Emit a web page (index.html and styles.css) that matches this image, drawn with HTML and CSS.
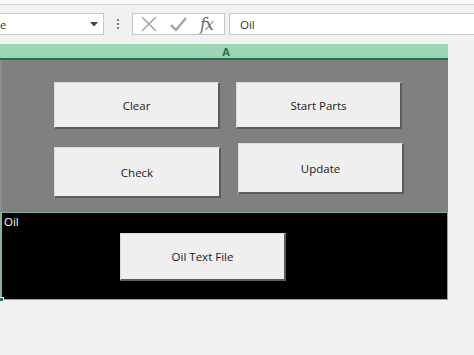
FILE: index.html
```html
<!DOCTYPE html>
<html>
<head>
<meta charset="utf-8">
<link rel="stylesheet" href="styles.css">
</head>
<body>
<div class="page">
  <div class="topstrip"></div>
  <div class="fbar">
    <div class="namebox">
      <span class="nametext">e</span>
      <svg class="dd" width="8" height="5" viewBox="0 0 8 5"><path d="M0 0H8L4 4.5Z" fill="#444"/></svg>
    </div>
    <div class="dots"><i></i><i></i><i></i></div>
    <div class="fxbox">
      <svg width="18" height="18" viewBox="0 0 18 18"><path d="M2 2L16 16M16 2L2 16" stroke="#a6a6a6" stroke-width="1.6" fill="none"/></svg>
      <svg width="18" height="18" viewBox="0 0 18 18"><path d="M2 10L7 15L17 3" stroke="#a6a6a6" stroke-width="2.4" fill="none"/></svg>
      <span class="fx">fx</span>
    </div>
    <div class="finput">Oil</div>
  </div>
  <div class="sheet">
    <div class="col">
      <div class="colhead">A</div>
      <div class="grayarea">
        <div class="bcol left">
          <div class="btn b1">Clear</div>
          <div class="btn b3">Check</div>
        </div>
        <div class="bcol right">
          <div class="btn b2">Start Parts</div>
          <div class="btn b4">Update</div>
        </div>
      </div>
      <div class="blackarea">
        <div class="oillabel">Oil</div>
        <div class="btn b5">Oil Text File</div>
        <span class="handle"></span>
      </div>
    </div>
    <div class="filler"></div>
  </div>
</div>
</body>
</html>
```
FILE: styles.css
```css
html, body { margin: 0; padding: 0; }
body {
  width: 474px;
  height: 355px;
  overflow: hidden;
  background: #f1f1f1;
  font-family: "Open Sans", "Noto Sans", sans-serif;
}
.page { display: flex; flex-direction: column; height: 355px; }
.topstrip {
  height: 4px;
  background: #fafafa;
  border-bottom: 1px solid #d4d4d4;
}
.fbar {
  display: flex;
  align-items: stretch;
  height: 22px;
  margin-top: 8px;
}
.namebox {
  width: 104px;
  background: #fff;
  border: 1px solid #c8c8c8;
  border-left: none;
  box-sizing: border-box;
  display: flex;
  align-items: center;
  justify-content: space-between;
  padding-right: 5px;
  font-size: 11px;
  color: #333;
}
.nametext { margin-left: 0; }
.dd { margin-top: 1px; }
.dots {
  width: 28px;
  display: flex;
  flex-direction: column;
  align-items: center;
  justify-content: center;
  gap: 2px;
}
.dots i { width: 2px; height: 2px; background: #777; display: block; }
.fxbox {
  width: 93px;
  background: #fff;
  border: 1px solid #c8c8c8;
  box-sizing: border-box;
  display: flex;
  align-items: center;
  padding-left: 7px;
  gap: 11px;
}
.fx {
  font-family: "DejaVu Serif", "Liberation Serif", serif;
  font-style: italic;
  font-size: 16px;
  color: #666;
  margin-left: 2px;
  letter-spacing: -1px;
}
.finput {
  flex: 1;
  margin-left: 4px;
  background: #fff;
  border: 1px solid #c8c8c8;
  border-right: none;
  box-sizing: border-box;
  padding-left: 10px;
  font-size: 11.5px;
  color: #333;
  display: flex;
  align-items: center;
}
.sheet {
  display: flex;
  margin-top: 9px;
  flex: 1;
}
.col { width: 448px; display: flex; flex-direction: column; }
.filler { flex: 1; background: #f0f0f0; }
.colhead {
  height: 14px;
  background: #9fd5b7;
  border-bottom: 2px solid #217346;
  color: #217346;
  font-weight: bold;
  font-size: 11px;
  text-align: center;
  line-height: 15px;
  padding-left: 4px;
}
.grayarea {
  height: 152px;
  background: #808080;
  border-left: 2px solid #8c8c8c;
  box-sizing: border-box;
  display: flex;
  padding-left: 52px;
  gap: 15px;
}
.bcol { display: flex; flex-direction: column; }
.btn {
  background: #efefef;
  box-sizing: border-box;
  border-top: 1px solid #dadada;
  border-left: 1px solid #dadada;
  border-right: 2px solid #5c5c5c;
  border-bottom: 2px solid #5c5c5c;
  display: flex;
  align-items: center;
  justify-content: center;
  font-size: 11.5px;
  font-weight: 500;
  color: #1a1a1a;
}
.b1 { width: 166px; height: 47px; margin-top: 22px; }
.b3 { width: 167px; height: 51px; margin-top: 18px; }
.b2 { width: 166px; height: 47px; margin-top: 22px; }
.b4 { width: 166px; height: 51px; margin-top: 14px; margin-left: 2px; }
.blackarea {
  position: relative;
  height: 88px;
  background: #000;
  border: 1px solid #7fae95;
  border-left: 2px solid #86b29b;
  box-sizing: border-box;
  display: flex;
  flex-direction: column;
}
.oillabel {
  color: #fff;
  font-size: 11.5px;
  line-height: 14px;
  padding-left: 2px;
  margin-top: 2px;
}
.b5 { width: 166px; height: 48px; margin-top: 4px; margin-left: 118px; }
.handle {
  position: absolute;
  left: -3px;
  bottom: -3px;
  width: 5px;
  height: 5px;
  background: #217346;
  border: 1px solid #fff;
  box-sizing: border-box;
}
```
